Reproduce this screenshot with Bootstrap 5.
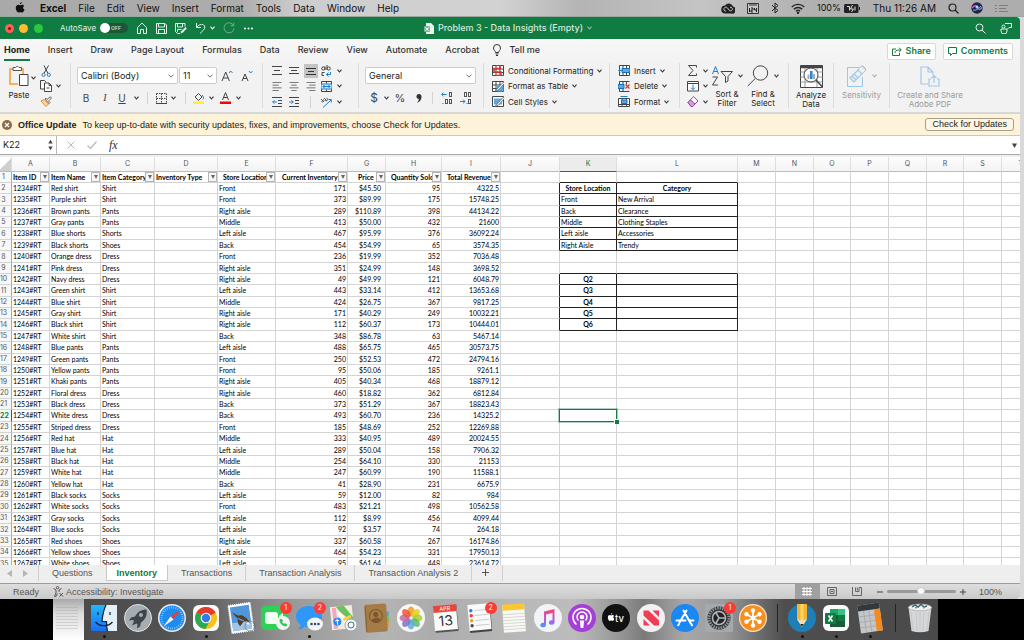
<!DOCTYPE html>
<html lang="en">
<head>
<meta charset="utf-8">
<meta name="viewport" content="width=device-width, initial-scale=1">
<title>Problem 3 - Data Insights (Empty)</title>
<link href="https://cdn.jsdelivr.net/npm/bootstrap@5.3.0/dist/css/bootstrap.min.css" rel="stylesheet">
<style>
:root{--xl:#107c41;--line:#d4d4d4}
body{font-family:Inter,"Liberation Sans",sans-serif;font-size:8px;line-height:10px;color:#222;background:#d9d9d9;height:100vh;overflow:hidden}
button,select,input{font:inherit;color:inherit}
button{background:none;border:0;padding:0}
a{color:inherit;text-decoration:none}
svg{display:block;flex:none}
.chev{width:5px;height:4px;fill:none;stroke:#333;stroke-width:1.1}
/* system menu */
.menubar{height:17px;font-size:10px;line-height:16px;color:#111;background:linear-gradient(90deg,#a9a9a9 0,#adadad 240px,#cdcdcd 300px,#d2d2d2 500px,#b4b4b4 580px,#c4c4c4 700px,#b0b0b0 820px,#adadad 100%);border-bottom:1px solid #9aa79f}
.menus{gap:12px;margin-left:15px}
.tray{gap:12px;padding-right:16px}
.tray .batt{gap:3px;font-size:9px}
/* window */
.win{margin-right:4px;background:#f3f3f3}
.titlebar{height:22px;background:var(--xl);color:#e6f2ea;border-radius:0 4px 0 0;display:grid;grid-template-columns:1fr auto 1fr;align-items:center}
.lamp{width:9px;height:9px;border-radius:50%;display:flex;align-items:center;justify-content:center}
.lamp i{width:3px;height:3px;border-radius:50%;background:#7a0f0b}
.switch{width:28px;height:10px;border-radius:5px;background:#1d5636;color:#cfe0d6;font-size:5px;line-height:10px;font-weight:600;padding-left:11px;position:relative;text-align:left}
.switch::before{content:"";position:absolute;left:0;top:0;width:10px;height:10px;border-radius:50%;background:#fff}
.doc{font-size:9px;font-weight:500;color:#d5eadd;padding-right:4px}
.tabs{height:24px;font-size:9px;font-weight:500;color:#333;background:linear-gradient(#f7f7f7,#f3f3f3)}
.tabs nav{gap:18px;padding-left:4px}
.tabs nav a{line-height:12px;padding:5px 0 3px;border-bottom:2px solid transparent}
.tabs nav a.active{font-weight:700;border-color:var(--xl);color:#222}
.sharebtn{height:17px;background:#fff;border:1px solid #d8d8d8;border-radius:2px;color:var(--xl);font-weight:600;padding:0 4px}
.ribbon{height:50px;background:#f2f2f2;border-bottom:1px solid #d8d8d8}
.grp{height:45px;border-right:1px solid #dcdcdc;flex:none}
.grp.end{border:0}
.r3{display:grid;grid-template-rows:15px 16px 15px;align-items:center}
.vsep{width:1px;height:12px;background:#d4d4d4}
.form-select.pick{height:17px;min-height:0;font-size:9px;line-height:15px;padding:0 14px 0 3px;border:1px solid #ccc;border-radius:2px;background-size:6px;background-position:right 3px center;background-color:#fff;color:#222}
.slot{display:flex;align-items:center;justify-content:center;flex:none}
.w7{width:7px}.w14{width:14px}.w18{width:18px}.w20{width:20px}
.lbl{line-height:9px;text-align:center;color:#222;margin-top:2px}
.dim{color:#9a9a9a}
.bigic{height:26px;gap:5px}
.fmt{font-size:10px;color:#444}
.align{grid-template-columns:17px 17px 17px 14px 12px;justify-items:center}
.on{background:#c3c3c3;width:14px;height:14px}
/* update bar */
.update{height:23px;background:#fdf3da;border-top:1px solid #d8d5cc;border-bottom:1px solid #cfc8b0;font-family:"Liberation Sans",Arial,sans-serif;font-size:9px;color:#222}
.update .chk{height:13px;border:1px solid #a89f88;border-radius:3px;padding:0 6px;line-height:11px;font-size:9px;background:#fdf6e4}
/* formula bar */
.formula{height:19px;background:#fff;border-bottom:1px solid #a8a8a8}
.namebox{width:48px;border:0;background:#fff;padding:0 3px;font-size:9px;outline:0}
.fx{font:italic 12px/14px "Liberation Serif",serif;color:#333}
.entry{border:0;outline:0;background:#fff;min-width:0}
/* sheet */
.sheet{background:#fff;border-top:2px solid #efefef;min-height:0;overflow:hidden;font-family:Lato,"Liberation Sans",sans-serif;font-size:7px;color:#000}
.sheet table{table-layout:fixed;width:100%;border-collapse:separate;border-spacing:0}
.sheet td,.sheet th{padding:0 1px;border-right:1px solid var(--line);border-bottom:1px solid var(--line);white-space:nowrap;overflow:hidden;line-height:10px;height:11px;font-weight:400}
.sheet tbody tr:nth-child(8n+3) td,.sheet tbody tr:nth-child(8n+6) td,.sheet tbody tr:nth-child(8n+8) td{height:12px;line-height:11px}
.sheet thead th{height:15px;line-height:14px;text-align:center;color:#555;background:linear-gradient(#fdfdfd,#f3f3f3);border-right-color:#dedede;border-bottom-color:#bcbcbc;font-family:Inter,sans-serif}
.sheet thead th.sel{background:#ececec;color:var(--xl);border-bottom-color:var(--xl)}
.sheet thead th.corner{background:linear-gradient(135deg,transparent 50%,#cfcfcf 50%)}
.sheet tbody th{padding:0 4px 0 0;text-align:center;color:#555;background:#f8f8f8;border-right-color:#a9a9a9;font-family:Inter,sans-serif}
.sheet tbody th.sel{color:var(--xl);font-weight:700;border-right-color:var(--xl)}
.sheet td.hd{font-weight:700}
.hdin{display:flex;align-items:center;height:10px}
.hdin span{flex:1;overflow:hidden}
.fbtn{width:9px;height:10px;border:1px solid #b5b5b5;background:#f7f7f7;display:flex;align-items:center;justify-content:center;flex:none;margin-right:-1px}
.fbtn::after{content:"";border:2px solid transparent;border-top:4px solid #666;border-bottom:0}
.sheet td.num{text-align:right}
.sheet td.cash{text-align:right;padding-right:4px}
.sheet td.blkR{border-right-color:#222}
.sheet td.blkB{border-bottom-color:#222}
.sheet td.cur{position:relative;overflow:visible}
.cur::before{content:"";position:absolute;inset:-1px;border:1px solid var(--xl);box-shadow:0 0 0 1px #107c4155}
.cur::after{content:"";position:absolute;right:-3px;bottom:-3px;width:4px;height:4px;background:var(--xl);border:solid #fff;border-width:1px 0 0 1px;box-sizing:content-box}
/* sheet tabs, status */
.stabs,.status{font-family:"Liberation Sans",Arial,sans-serif;font-size:9px}
.stabs{height:18px;background:#eee;color:#555}
.stabs a{padding:0 13px;line-height:17px;height:16px;border-right:1px solid #d0d0d0}
.stabs a.active{background:#fff;color:var(--xl);font-weight:700;padding:0 10px;border:1px solid #c8c8c8;border-top:0}
.status{height:16px;background:linear-gradient(#dedede,#c9c9c9);border-top:1px solid #9c9c9c;color:#555;border-radius:0 0 4px 0}
.vbtn{width:25px;height:15px}
.vbtn.act{background:#a0a0a0}
.zoomer{appearance:none;width:69px;height:8px;background:transparent}
.zoomer::-webkit-slider-runnable-track{height:3px;border-radius:2px;background:#999}
.zoomer::-webkit-slider-thumb{appearance:none;width:8px;height:8px;margin-top:-3px;border-radius:50%;background:#fafafa;border:1px solid #ccc}
/* dock */
.dockrow{height:41px;background:#000}
.paper{width:31px;background:repeating-linear-gradient(#0000 0 2px,#8884 2px 3px) 3px 6px/22px 24px no-repeat,linear-gradient(#a8a8a8,#dcdcdc 35%,#fff)}
.dock{width:854px;background:linear-gradient(90deg,#4b4b4b 0,#525252 80px,#666 130px,#999 210px,#b4b4b4 300px,#acacac 350px,#b9b9b9 440px,#bcbcbc 490px,#929292 540px,#7a7a7a 560px,#a8a8a8 600px,#9a9a9a 640px,#4e4e4e 700px,#4a4a4a 100%);padding:5px 0 0 6px}
.apps{width:677px}
.app{width:28px;height:36px;position:relative;display:block}
.app svg{width:28px;height:28px;overflow:visible}
.app.run::after{content:"";position:absolute;left:13px;bottom:2px;width:3px;height:3px;border-radius:50%;background:#111}
.bub{position:absolute;right:-3px;top:-2px;width:12px;height:12px;border-radius:50%;background:#fb3b36;color:#fff;font-size:7px;line-height:12px;text-align:center}
.dsep{width:1px;height:28px;background:#222}
</style>
</head>
<body class="d-flex flex-column">

<svg width="0" height="0" class="position-absolute" aria-hidden="true">
  <symbol id="c" viewBox="0 0 5 4"><path d="M.5 .7 2.5 3 4.5 .7"/></symbol>
  <symbol id="apple" viewBox="0 0 14 17"><path d="M9.6 0c.1 1.500-1.300 3-2.700 3C6.700 1.600 8.200.1 9.600 0zM12.700 5.600c-1.900 1.200-1.600 4.200.7 5.200-.6 1.800-2 4.200-3.400 4.200-1 0-1.300-.6-2.600-.6s-1.700.6-2.600.6C3.200 15 .8 11.200 1 8.300c.1-2.800 2-4.300 3.700-4.300 1.100 0 2 .7 2.700.7s1.800-.8 3.200-.7c.8 0 1.700.5 2.100 1.600z"/></symbol>
</svg>

<header class="menubar d-flex align-items-center flex-shrink-0">
  <svg width="10" height="12" viewBox="0 0 14 17" style="margin-left:15px" fill="#111"><use href="#apple"/></svg>
  <nav class="menus d-flex"><a href="#"><b>Excel</b></a><a href="#">File</a><a href="#">Edit</a><a href="#">View</a><a href="#">Insert</a><a href="#">Format</a><a href="#">Tools</a><a href="#">Data</a><a href="#">Window</a><a href="#">Help</a></nav>
  <div class="tray d-flex align-items-center ms-auto">
    <svg width="14" height="11" viewBox="0 0 14 11"><path d="M4.500 10.500a4 4 0 0 1-.5-8A4.500 4.500 0 0 1 12 3.500a3.600 3.600 0 0 1-2 7z" fill="#222"/><path d="M5 8.200a2 2 0 1 1 1.500-3.200L8.500 7.500A1.800 1.800 0 1 0 9 4.400" fill="none" stroke="#ccc"/></svg>
    <svg width="12" height="11" viewBox="0 0 12 11"><path d="M.5.500h11v10H.5z" fill="#c8c8c8" stroke="#333"/><path d="M2 2h8" stroke="#333"/><path d="M2.500 5v4M4 5h2v2H4v2h2M7.500 5v2h2M9.500 5v4" fill="none" stroke="#222"/></svg>
    <svg width="8" height="12" viewBox="0 0 8 12"><path d="M1 3.200 7 8.500 4 11V1l3 2.500L1 9" fill="none" stroke="#222"/></svg>
    <svg width="14" height="11" viewBox="0 0 14 11" fill="none" stroke="#222" stroke-width="1.300"><path d="M.7 4a9 9 0 0 1 12.600 0M2.800 6.200a6 6 0 0 1 8.400 0M4.900 8.200a3 3 0 0 1 4.200 0"/><circle cx="7" cy="9.800" r=".6"/></svg>
    <span class="batt d-flex align-items-center">100%<svg width="17" height="9" viewBox="0 0 17 9"><rect width="14.500" height="9" rx="1.500" fill="#222"/><path d="M15.500 3v3" stroke="#222"/><path d="M3 2.500h2.500v4M8.500 1 6.500 5h3L7.500 8M11 2.500v4" stroke="#ddd" fill="none"/></svg></span>
    <span>Thu 11:26 AM</span>
    <svg width="11" height="11" viewBox="0 0 11 11" fill="none" stroke="#222" stroke-width="1.200"><circle cx="4.500" cy="4.500" r="3.500"/><path d="m7 7 3.500 3.500"/></svg>
    <svg width="12" height="12" viewBox="0 0 12 12"><circle cx="6" cy="6" r="5.700" fill="#222547"/><path d="M1 6c3-4 5-2 6 0s3 2 4-1" stroke="#d25bc0" fill="none" stroke-width="1.500"/><path d="M2 8c3 1 5-1 8-4" stroke="#4bd3e8" fill="none"/><circle cx="6" cy="5" r="1.500" fill="#b9c8ff"/></svg>
    <svg width="13" height="9" viewBox="0 0 13 9"><path d="M4 1.500h9M4 4.500h7M4 7.500h9M0 1.500h2M0 4.500h2M0 7.500h2" stroke="#7d7d7d"/></svg>
  </div>
</header>

<main class="win d-flex flex-column flex-grow-1" style="min-height:0">
  <div class="titlebar flex-shrink-0">
    <div class="d-flex align-items-center">
      <span class="lamp" style="background:#fe5f57;margin-left:5px"><i></i></span><span class="lamp" style="background:#febc2e;margin-left:5px"></span><span class="lamp" style="background:#28c840;margin-left:6px"></span>
      <label for="asv" style="margin-left:17px">AutoSave</label>
      <button id="asv" class="switch ms-1">OFF</button>
      <button class="ms-2" aria-label="Home"><svg width="12" height="12" viewBox="0 0 12 12" fill="none" stroke="#e6f2ea"><path d="M1.500 5.500 6 1l4.500 4.500v6h-3v-4h-3v4h-3z"/></svg></button>
      <button class="ms-2" aria-label="Save"><svg width="11" height="11" viewBox="0 0 11 11" fill="none" stroke="#e6f2ea"><path d="M.5.500h8.500l1.500 1.500v8.500H.5zM2.500.5v3.500h6V.5M2.500 10.500V6.500h6v4"/></svg></button>
      <button class="ms-2" aria-label="Save as"><svg width="12" height="11" viewBox="0 0 12 11" fill="none" stroke="#e6f2ea"><path d="M5 10.500H2.500L.5 8.500V.5h9.500v3M2.500.5v3.500h5V.5M2.500 9V6.500h4"/><path d="m5.500 10.500.7-2.300 4.300-4.200 1.300 1.500L7.700 9.800z" fill="#e6f2ea" stroke="none"/></svg></button>
      <button class="ms-2" aria-label="Undo"><svg width="11" height="12" viewBox="0 0 11 12" fill="none" stroke="#e6f2ea"><path d="M1.500 1v4.500H6M1.700 5.300C4 1.500 9.500 1.500 9.800 5c.2 2.500-2.500 4-4.800 6.500"/></svg></button>
      <svg class="chev ms-1" style="stroke:#fff"><use href="#c"/></svg>
      <button class="ms-2" aria-label="Redo"><svg width="12" height="12" viewBox="0 0 12 12" fill="none" stroke="#6fae8c"><path d="M10.500 3.500A5 5 0 1 0 11 6.500M10.800.8v3H7.500"/></svg></button>
      <svg class="ms-2" width="11" height="3" viewBox="0 0 11 3" fill="#fff"><circle cx="2" cy="1.500" r="1"/><circle cx="5.500" cy="1.500" r="1"/><circle cx="9" cy="1.500" r="1"/></svg>
    </div>
    <div class="d-flex align-items-center doc gap-1">
      <svg width="10" height="11" viewBox="0 0 10 11"><path d="M2 0h5l3 3v8H2z" fill="#e9f3ec"/><rect y="3" width="6" height="6" rx="1" fill="#7bb696"/><path d="m1.500 4.500 3 3m0-3-3 3" stroke="#fff"/></svg>
      <span>Problem 3 - Data Insights (Empty)</span><svg class="chev" style="stroke:#8fc3a6"><use href="#c"/></svg>
    </div>
    <div class="d-flex align-items-center justify-content-end" style="padding-right:8px;gap:14px">
      <svg width="11" height="11" viewBox="0 0 11 11" fill="none" stroke="#e6f2ea"><circle cx="4.500" cy="4.500" r="3.500"/><path d="m7 7 3.500 3.500"/></svg>
      <svg width="12" height="12" viewBox="0 0 12 12" fill="none" stroke="#e6f2ea"><path d="M5 1.500h6.500v4H9L7.500 7M1 7h6v2a3 3 0 0 1-6 0z"/><circle cx="3.500" cy="4.500" r="1.500"/></svg>
    </div>
  </div>

  <div class="tabs d-flex flex-shrink-0">
    <nav class="d-flex align-items-start"><a href="#" class="active">Home</a><a href="#">Insert</a><a href="#">Draw</a><a href="#">Page Layout</a><a href="#">Formulas</a><a href="#">Data</a><a href="#">Review</a><a href="#">View</a><a href="#">Automate</a><a href="#">Acrobat</a></nav>
    <button class="d-flex align-items-center gap-2 h-100" style="margin-left:14px;padding-bottom:3px"><svg width="8" height="12" viewBox="0 0 8 12" fill="none" stroke="#333"><path d="M2.500 8.500C2.500 7 .5 6.300.5 4a3.500 3.500 0 0 1 7 0c0 2.300-2 3-2 4.500zM2.500 10h3M3 11.500h2"/></svg>Tell me</button>
    <div class="ms-auto d-flex align-items-center" style="padding-right:7px;gap:7px">
      <button class="sharebtn d-flex align-items-center gap-1"><svg width="10" height="9" viewBox="0 0 10 9" fill="none" stroke="#107c41"><path d="M4 2H.5v6.500h7V6M3 6c0-2 1.500-3 3.500-3H9M7 .7 9.300 3 7 5.200"/></svg>Share</button>
      <button class="sharebtn d-flex align-items-center gap-1"><svg width="9" height="9" viewBox="0 0 9 9" fill="none" stroke="#107c41"><path d="M.5.500h8v6H4.500L2.500 8.500v-2h-2z"/></svg>Comments</button>
    </div>
  </div>

  <div class="ribbon d-flex flex-shrink-0">
    <div class="grp d-flex" style="width:71px">
      <button class="d-flex flex-column align-items-center" style="width:24px;margin-left:7px"><svg width="20" height="24" viewBox="0 0 20 24" fill="none"><path d="M5 6H1v15h8M14 11V6h-4" stroke="#f0a23b" stroke-width="1.600"/><path d="M4 4.500h2.500a2 2 0 0 1 3.500 0h2.500v3H4z" stroke="#555" fill="#fff"/><path d="M10.500 11.500h8.500v11h-8.500z" stroke="#444" fill="#fff"/></svg><span class="lbl mt-1">Paste</span></button>
      <svg class="chev" style="margin-top:13px"><use href="#c"/></svg>
      <div class="r3" style="margin-left:4px">
        <svg width="12" height="12" viewBox="0 0 12 12" fill="none"><path d="m4 .5 4 8M8.500.500l-4.500 8" stroke="#444"/><circle cx="3.500" cy="9.800" r="1.600" stroke="#1b7fd0"/><circle cx="8.800" cy="9.800" r="1.600" stroke="#1b7fd0"/></svg>
        <div class="d-flex align-items-center gap-1"><svg width="12" height="12" viewBox="0 0 12 12" fill="#fff" stroke="#444"><path d="M.5.500h4l1.500 1.500M.5.500v8.500h4"/><path d="M4.500 3h4.500l2.500 2.500v6h-7zM9 3v2.500h2.500M6.500 8h3"/></svg><svg class="chev"><use href="#c"/></svg></div>
        <svg width="12" height="12" viewBox="0 0 12 12"><path d="m1 5 5 5.500L8.500 8 4 3.500z" fill="#fbd9a8" stroke="#e28a2b"/><path d="m5 3 4 4.500 1-1-1.500-1.500L11.500 2 10.300.8 7 3.500 6 2.200z" fill="#fff" stroke="#555" stroke-width=".9"/></svg>
      </div>
    </div>

    <div class="grp d-flex flex-column" style="width:192px;padding:4px 0 0 6px">
      <div class="d-flex align-items-center"><select class="form-select pick" aria-label="Font" style="width:101px"><option>Calibri (Body)</option></select><select class="form-select pick" aria-label="Size" style="width:38px;margin-left:1px"><option>11</option></select>
        <svg class="ms-1" width="12" height="12" viewBox="0 0 12 12" fill="none" stroke="#444"><path d="m1 11 3.700-9 3.700 9M2.300 8h4.800"/><path d="m8 3 1.700-2L11.500 3" stroke="#1b7fd0"/></svg><svg style="margin-left:8px" width="12" height="12" viewBox="0 0 12 12" fill="none" stroke="#444"><path d="m1 11 3-7 3 7M2 8.500h4"/><path d="m8 1 1.700 2L11.500 1" stroke="#1b7fd0"/></svg></div>
      <div class="d-flex align-items-center fmt" style="height:24px;padding-top:4px">
        <button class="slot w18">B</button><button class="slot w20" style="font-family:'Liberation Serif',serif"><i>I</i></button><button class="slot w14"><u>U</u></button><span class="slot w14"><svg class="chev"><use href="#c"/></svg></span><span class="vsep ms-1"></span>
        <span class="slot w18 ms-1"><svg width="11" height="11" viewBox="0 0 11 11" fill="none" stroke="#444"><path d="M.5.500h10M.5.500v10M10.500.5v10M5.500.5v10M.5 5.500h10" stroke-dasharray="1.500 1"/><path d="M0 10.500h11"/></svg></span><span class="slot w7 me-1"><svg class="chev"><use href="#c"/></svg></span><span class="vsep ms-1"></span>
        <span class="slot w18 ms-1"><svg width="12" height="12" viewBox="0 0 12 12" fill="none"><path d="m2 5 3.500-3.500L9 5 5.500 8.500z" stroke="#444"/><path d="M9 3c1.500 1.500 2 2.800 1 4.300" stroke="#1b7fd0"/><path d="M0 9.500h11V12H0z" fill="#fff02a"/></svg></span><span class="slot w7"><svg class="chev"><use href="#c"/></svg></span>
        <span class="slot w20"><svg width="11" height="12" viewBox="0 0 11 12"><path d="M2.500 8 5.500.5l3 7.500M3.500 5.500h4" fill="none" stroke="#444"/><path d="M0 9.500h11V12H0z" fill="#f00"/></svg></span><span class="slot w7"><svg class="chev"><use href="#c"/></svg></span>
      </div>
    </div>

    <div class="grp" style="width:96px;padding-left:5px">
      <div class="r3 align">
        <svg width="10" height="9" viewBox="0 0 10 9" stroke="#444"><path d="M0 .5h10M2 4.500h6M0 8.500h10"/></svg>
        <svg width="10" height="9" viewBox="0 0 10 9" stroke="#444"><path d="M0 1.500h10M2 4.500h6M0 7.500h10"/></svg>
        <span class="on slot"><svg width="10" height="9" viewBox="0 0 10 9" stroke="#333"><path d="M0 2.500h10M2 5.500h6M0 8.500h10"/></svg></span>
        <svg width="11" height="12" viewBox="0 0 11 12" fill="none" stroke="#444"><circle cx="2.300" cy="3.500" r="1.600"/><path d="M4 1.500V5M6 0v5"/><circle cx="7.700" cy="3.500" r="1.600"/><path d="M3.500 7.500H1v3h2" /><path d="M9.500 7v2.500h-4M7.500 7.500l-2 2 2 2" stroke="#1b7fd0"/></svg><svg class="chev"><use href="#c"/></svg>
        <svg width="10" height="9" viewBox="0 0 10 10" stroke="#666"><path d="M0 .5h10M0 3.500h7M0 6.500h10M0 9.500h7"/></svg>
        <svg width="10" height="9" viewBox="0 0 10 10" stroke="#666"><path d="M0 .5h10M2 3.500h6M0 6.500h10M2 9.500h6"/></svg>
        <svg width="10" height="9" viewBox="0 0 10 10" stroke="#666"><path d="M0 .5h10M3 3.500h7M0 6.500h10M3 9.500h7"/></svg>
        <svg width="11" height="11" viewBox="0 0 11 11" fill="none" stroke="#444"><path d="M.5.500h10v10H.5zM5.500.5v2M5.500 8.500v2"/><path d="M0 3h11v5H0z" fill="#cfe6f8" stroke="#1b7fd0"/><path d="M2 5.500h7M3.500 4 2 5.500 3.500 7M7.500 4 9 5.500 7.500 7" stroke="#1b7fd0"/></svg><svg class="chev"><use href="#c"/></svg>
        <svg width="10" height="10" viewBox="0 0 10 10" fill="none" stroke="#444"><path d="M0 .5h10M6 3.500h4M6 6.500h4M0 9.500h10"/><path d="M5 5H.7M2.500 3.200.7 5l1.800 1.800" stroke="#1b7fd0"/></svg>
        <svg width="10" height="10" viewBox="0 0 10 10" fill="none" stroke="#444"><path d="M0 .5h10M6 3.500h4M6 6.500h4M0 9.500h10"/><path d="M0 5h4.300M2.500 3.200 4.300 5 2.500 6.800" stroke="#1b7fd0"/></svg>
        <span class="vsep"></span>
        <svg width="12" height="12" viewBox="0 0 12 12" fill="none"><path d="m1 3 3 3M4 2l3 3M1.500 5.500a1.400 1.400 0 1 0 2-2M5 4a1.400 1.400 0 1 0 1.500-2" stroke="#555"/><path d="M3 11.500 11 4M8.500 3.500H11.300V6.500" stroke="#1b7fd0"/></svg><svg class="chev"><use href="#c"/></svg>
      </div>
    </div>

    <div class="grp d-flex flex-column" style="width:125px;padding:4px 0 0 6px">
      <select class="form-select pick" aria-label="Number format" style="width:111px"><option>General</option></select>
      <div class="d-flex align-items-center" style="height:24px;padding-top:4px;font-size:12px;color:#444">
        <button class="slot w18">$</button><span class="slot w7"><svg class="chev"><use href="#c"/></svg></span><button class="slot w20" style="font-size:11px">%</button><button class="slot w18"><svg width="6" height="9" viewBox="0 0 6 9"><path d="M3 0a2.500 2.500 0 0 1 2.500 3C5.500 6 3.500 8 1 9c1-1.500 1.800-2.500 1.800-4A2.500 2.500 0 1 1 3 0z" fill="#333"/></svg></button><span class="vsep ms-1"></span>
        <svg class="ms-2" width="12" height="12" viewBox="0 0 12 12" fill="none" stroke="#555"><path d="M5.500 2.500H.7M2.500.7.700 2.500l1.800 1.800" stroke="#1b7fd0"/><rect x="8.500" y=".5" width="2" height="4"/><rect x="4.500" y="7.500" width="2" height="4"/><rect x="8.500" y="7.500" width="2" height="4"/><path d="M2 11v1"/></svg>
        <svg style="margin-left:7px" width="12" height="12" viewBox="0 0 12 12" fill="none" stroke="#555"><path d="M0 9.500h5M3.200 7.700 5 9.500l-1.800 1.800" stroke="#1b7fd0"/><rect x="4.500" y=".5" width="2" height="4"/><rect x="8.500" y=".5" width="2" height="4"/><rect x="8.500" y="7.500" width="2" height="4"/><path d="M7 11v1"/></svg>
      </div>
    </div>

    <div class="grp r3 ps-2" style="width:126px">
      <button class="d-flex align-items-center gap-1"><svg width="12" height="11" viewBox="0 0 12 11"><path d="M.5.500h11v10H.5zM.5 4h11M.5 7.500h11M4 .5v10M8 .5v10" fill="#fff" stroke="#444"/><path d="M4 0h4v3.500H2V7h7v3.500H4" fill="none" stroke="#e0312c" stroke-width="1.500"/></svg>Conditional Formatting<svg class="chev"><use href="#c"/></svg></button>
      <button class="d-flex align-items-center gap-1"><svg width="12" height="11" viewBox="0 0 12 11"><path d="M.5.500h11v10H.5zM.5 4h11M.5 7.500h11M4 .5v10M8 .5v10" fill="#fff" stroke="#444"/><path d="M4.500 4h7v6.500h-7z" fill="#5aa9e6"/><path d="M11.500 1 6 7 3 10.500l3.500-1.500L12 3" fill="#fff" stroke="#555" stroke-width=".7"/></svg>Format as Table<svg class="chev"><use href="#c"/></svg></button>
      <button class="d-flex align-items-center gap-1"><svg width="12" height="11" viewBox="0 0 12 11"><path d="M.5.500h11v10H.5z" fill="#fff" stroke="#444"/><path d="M2 2.500h8v6H2z" fill="#5aa9e6"/><path d="M11.500 1 6 7 3 10.500l3.500-1.500L12 3" fill="#fff" stroke="#555" stroke-width=".7"/></svg>Cell Styles<svg class="chev"><use href="#c"/></svg></button>
    </div>

    <div class="grp r3 ps-2" style="width:70px">
      <button class="d-flex align-items-center gap-1"><svg width="12" height="11" viewBox="0 0 12 11"><path d="M1.500.5h10v10h-10zM5 .5v10M8.500.5v10" fill="#fff" stroke="#444"/><path d="M4 3.500h8v4H4z" fill="#5aa9e6" stroke="#1b6fb8"/><path d="M5 5.500H.7M2.500 3.700.7 5.500l1.800 1.800" fill="none" stroke="#1b7fd0"/></svg>Insert<svg class="chev"><use href="#c"/></svg></button>
      <button class="d-flex align-items-center gap-1"><svg width="12" height="11" viewBox="0 0 12 11"><path d="M1.500.5h10M1.500 10.500h10M1.500.5v3M5 .5v3M8.500.5v3M1.500 7.500v3M5 7.500v3" fill="none" stroke="#444"/><path d="M0 3.500h6v4H0z" fill="#5aa9e6" stroke="#1b6fb8"/><path d="m7.500 3.500 4 4m0-4-4 4" stroke="#e0312c" stroke-width="1.200"/></svg>Delete<svg class="chev"><use href="#c"/></svg></button>
      <button class="d-flex align-items-center gap-1"><svg width="12" height="11" viewBox="0 0 12 11"><path d="M.5 2.500h11v8H.5zM4 2.500v8M8.500 2.500v8M.5 8.500h11" fill="#fff" stroke="#444"/><path d="M3.500 4h5.500v3.500H3.500z" fill="#5aa9e6" stroke="#1b6fb8"/><path d="M2.500.5h7" stroke="#1b7fd0"/></svg>Format<svg class="chev"><use href="#c"/></svg></button>
    </div>

    <div class="grp d-flex" style="width:109px;padding-left:7px">
      <div class="r3">
        <span class="d-flex align-items-center gap-1"><svg width="12" height="11" viewBox="0 0 12 11" fill="none" stroke="#444"><path d="M9.500 2.500V.5H1.500L6 5.500 1.500 10.500h8v-2"/></svg><svg class="chev"><use href="#c"/></svg></span>
        <span class="d-flex align-items-center gap-1"><svg width="12" height="11" viewBox="0 0 12 11" fill="#fff" stroke="#444"><path d="M.5.500h11v9.500H.5zM.5 2.500h11"/><path d="M6 3.500v5M4 6.700l2 2 2-2" fill="none" stroke="#1b7fd0"/></svg><svg class="chev"><use href="#c"/></svg></span>
        <span class="d-flex align-items-center gap-1"><svg width="12" height="11" viewBox="0 0 12 11"><path d="m1 6.500 5.500-6L11 5l-5.500 5.500H4z" fill="#fff" stroke="#a13fb0"/><path d="m1 6.500 2.500-2.700L8 8l-2.500 2.500H4z" fill="#d79be0" stroke="#a13fb0"/></svg><svg class="chev"><use href="#c"/></svg></span>
      </div>
      <button class="d-flex flex-column align-items-center" style="width:36px;margin-left:1px"><span class="d-flex align-items-center bigic"><svg width="22" height="20" viewBox="0 0 22 20" fill="none"><path d="m1.500 8 3-7.500 3 7.500M2.500 5.500h4" stroke="#1b7fd0"/><path d="M1.500 11h5l-5 8h5.500" stroke="#444"/><path d="M10 5.500h11.500l-4.500 5v4.500l-2.500 1.500v-6z" stroke="#444"/></svg><svg class="chev"><use href="#c"/></svg></span><span class="lbl">Sort &amp;<br>Filter</span></button>
      <button class="d-flex flex-column align-items-center" style="width:36px"><span class="d-flex align-items-center bigic"><svg width="22" height="22" viewBox="0 0 22 22" fill="none" stroke="#444"><circle cx="13.500" cy="8" r="7.200"/><path d="M8.300 13.500.7 21"/></svg><svg class="chev"><use href="#c"/></svg></span><span class="lbl">Find &amp;<br>Select</span></button>
    </div>

    <div class="grp" style="width:45px"><button class="d-flex flex-column align-items-center w-100"><span class="bigic d-flex align-items-center"><svg width="23" height="23" viewBox="0 0 23 23"><path d="M.5.500h22v22H.5z" fill="#fff" stroke="#444"/><path d="M.5 2h22" stroke="#444" stroke-width="2.500"/><path d="M.5 7h22M.5 12h22M.5 17h22M5 3v19M17 3v19" stroke="#999"/><circle cx="11" cy="10" r="7" fill="#fff" stroke="#444"/><path d="M7.500 9.500h2V14h-2zM13 9h2v5h-2z" fill="#aaa"/><path d="M10 6h2.600v8H10z" fill="#2b88d8"/><path d="m16 15 6.500 7" stroke="#444" stroke-width="1.500"/></svg></span><span class="lbl">Analyze<br>Data</span></button></div>
    <div class="grp" style="width:56px"><button class="d-flex flex-column align-items-center w-100"><span class="bigic d-flex align-items-center"><svg width="20" height="22" viewBox="0 0 20 22" fill="none" stroke="#9cc7e6"><path d="M12 2.500H.5v19h15V12"/><path d="m3 13 8-8 4 4-8 8zM5 11l4 4M7 9l4 4" stroke-width="1.200"/><path d="m11 5 3-4 5 4-4 4M15 0l4 4"/></svg><svg class="chev" style="stroke:#aaa"><use href="#c"/></svg></span><span class="lbl dim">Sensitivity</span></button></div>
    <div class="grp end" style="width:80px"><button class="d-flex flex-column align-items-center w-100"><span class="bigic d-flex align-items-center"><svg width="20" height="21" viewBox="0 0 20 21" fill="none" stroke="#a3c6ea" stroke-width="1.200"><path d="M8 18H1V1h7l5 5v3M8 1v5h5M11 13H9v7h10v-7h-2M14 17V10M11.500 12 14 9.500 16.500 12"/></svg></span><span class="lbl dim text-nowrap">Create and Share<br>Adobe PDF</span></button></div>
  </div>

  <div class="update d-flex align-items-center flex-shrink-0" role="status">
    <svg width="10" height="10" viewBox="0 0 10 10" style="margin-left:2px"><circle cx="5" cy="5" r="5" fill="#8b6a48"/><path d="m3 3 4 4m0-4-4 4" stroke="#fff" stroke-width="1.300"/></svg>
    <b style="margin-left:6px">Office Update</b><span style="margin-left:6px">To keep up-to-date with security updates, fixes, and improvements, choose Check for Updates.</span>
    <button class="chk ms-auto" style="margin-right:6px">Check for Updates</button>
  </div>

  <div class="formula d-flex align-items-center flex-shrink-0">
    <input class="namebox" value="K22" aria-label="Name box">
    <svg width="5" height="12" viewBox="0 0 5 12" fill="#444" style="margin-right:3px"><path d="M.3 4.500 2.500.8l2.200 3.700zM.3 7.500l2.200 3.700 2.200-3.700z"/></svg>
    <span style="width:1px;background:#bbb" class="h-100"></span>
    <svg width="8" height="8" viewBox="0 0 8 8" stroke="#bbb" style="margin-left:10px"><path d="m.5.500 7 7m0-7-7 7"/></svg>
    <svg width="10" height="8" viewBox="0 0 10 8" stroke="#bbb" fill="none" style="margin-left:12px" stroke-width="1.300"><path d="m.5 4.500 3 3 6-7"/></svg>
    <span class="fx" style="margin-left:12px">fx</span>
    <input class="entry flex-grow-1 ms-2" aria-label="Formula">
    <svg width="5" height="5" viewBox="0 0 5 5" fill="#444" style="margin-right:3px"><path d="M0 .5h5L2.500 5z"/></svg>
  </div>

  <div class="sheet flex-grow-1">
    <table><colgroup id="cols"></colgroup><thead><tr id="letters"></tr></thead><tbody id="rows"></tbody></table>
  </div>

  <nav class="stabs d-flex flex-shrink-0">
    <span class="d-flex align-items-center" style="width:39px;border-right:1px solid #d0d0d0;height:16px;padding-left:7px;gap:11px"><svg width="5" height="7" viewBox="0 0 5 7" fill="#b5b5b5"><path d="M5 0v7L0 3.500z"/></svg><svg width="5" height="7" viewBox="0 0 5 7" fill="#b5b5b5"><path d="M0 0v7l5-3.500z"/></svg></span>
    <a href="#" class="border-0">Questions</a><a href="#" class="active">Inventory</a><a href="#">Transactions</a><a href="#">Transaction Analysis</a><a href="#">Transaction Analysis 2</a><a href="#" aria-label="New sheet" style="padding-top:4px;padding-left:10px"><svg width="7" height="7" viewBox="0 0 7 7" stroke="#555"><path d="M0 3.500h7M3.500 0v7"/></svg></a>
  </nav>

  <footer class="status d-flex align-items-center flex-shrink-0">
    <span style="margin-left:13px">Ready</span>
    <svg style="margin-left:14px" width="11" height="11" viewBox="0 0 11 11" fill="none" stroke="#555"><circle cx="4.500" cy="1.700" r="1.200"/><path d="m.5 2.500 2.500 1.500v3l-1.500 3.500 1 .3 2-3.300M8.500 2.500 6 4v2"/><path d="m6.500 7 3.500 3.500m0-3.500-3.500 3.500"/></svg>
    <span style="margin-left:2px">Accessibility: Investigate</span>
    <div class="d-flex align-items-center ms-auto">
      <button class="vbtn act slot" aria-label="Normal"><svg width="10" height="9" viewBox="0 0 10 9" stroke="#fff"><path d="M0 1.500h10M0 4.500h10M0 7.500h10M2 0v9M5 0v9M8 0v9"/></svg></button>
      <button class="vbtn slot" aria-label="Page layout"><svg width="10" height="9" viewBox="0 0 10 9" fill="none" stroke="#666"><path d="M.5.500h9v8h-9zM3 2.500h4v4H3zM4 4.500h2"/></svg></button>
      <button class="vbtn slot" aria-label="Page break"><svg width="10" height="9" viewBox="0 0 10 9" fill="none" stroke="#666"><path d="M.5 0v8.500h9V.5H7v4H3.500V.5M5.300.5v3"/></svg></button>
      <svg width="6" height="2" viewBox="0 0 6 2" style="margin-left:7px"><path d="M0 1h6" stroke="#444"/></svg>
      <input type="range" class="zoomer mx-1" aria-label="Zoom">
      <svg width="6" height="6" viewBox="0 0 6 6" stroke="#444"><path d="M0 3h6M3 0v6"/></svg>
      <span style="margin:0 18px 0 13px">100%</span>
    </div>
  </footer>
</main>

<div class="dockrow d-flex flex-shrink-0">
  <div class="paper" style="margin-left:53px"></div>
  <div class="dock d-flex align-items-start">
    <div class="apps d-flex justify-content-between">
      <a href="#" class="app run" aria-label="Finder"><svg viewBox="0 0 28 28"><defs><linearGradient id="fb" x2="0" y2="1"><stop stop-color="#22b8fb"/><stop offset="1" stop-color="#1a6ff0"/></linearGradient></defs><rect x="1" y="1" width="26" height="26" rx="1" fill="url(#fb)"/><path d="M16 1h11v26H17.500c-.8-3-1-6-1-9H12C12.500 11 14 5 16 1z" fill="#e4effa"/><path d="M8 8v3M20 8v3M5.500 18c4.500 5 12.500 5 17 0M16 1c-2.500 5-3.500 11-4 16.500h4.500c0 3.500.2 6.500 1 9.500" stroke="#123" fill="none" stroke-width="1.200"/></svg></a>
      <a href="#" class="app" aria-label="Launchpad"><svg viewBox="0 0 28 28"><circle cx="14" cy="14" r="13.500" fill="#a6adb2" stroke="#dfe3e6"/><path d="M22.500 5.500c-5 0-9 2.500-11.500 7l-4 1-2 3 4-.5 1 1-2 4.500 4.500-2 1 1-.5 4 3-2 1-4c4.500-3 6.500-7.500 5.500-13z" fill="#3f4549"/><circle cx="17" cy="11" r="2" fill="#a6adb2"/></svg></a>
      <a href="#" class="app" aria-label="Safari"><svg viewBox="0 0 28 28"><circle cx="14" cy="14" r="14" fill="#e9edf0"/><circle cx="14" cy="14" r="12.500" fill="#1e8bf0"/><circle cx="14" cy="14" r="10.500" fill="none" stroke="#b5e0ff" stroke-dasharray=".6 1.600" stroke-width="2"/><path d="m22.500 5.500-7 10-3-3z" fill="#f8382f"/><path d="m5.500 22.500 7-10 3 3z" fill="#f4f4f4"/></svg></a>
      <a href="#" class="app run" aria-label="Chrome"><svg viewBox="0 0 28 28"><rect x="1" y="1" width="26" height="26" rx="6" fill="#fafafa"/><circle cx="14" cy="14" r="11" fill="#fbc116"/><path d="M14 14 4.500 8.500A11 11 0 0 1 23.500 8.500z" fill="#e33b2e"/><path d="M4.500 8.500A11 11 0 0 0 13.500 25L18 16.500 14 14z" fill="#2da94f"/><path d="M23.500 8.500H14v5z" fill="#e33b2e"/><circle cx="14" cy="14" r="5.300" fill="#fff"/><circle cx="14" cy="14" r="4.200" fill="#2f7de9"/></svg></a>
      <a href="#" class="app" aria-label="Mail"><svg viewBox="0 0 28 28"><g transform="rotate(-8 14 14)"><path d="M3 0h22v28H3z" fill="#fff" stroke="#fff" stroke-width="1.500" stroke-dasharray="1 1"/><path d="M4.500 2h19v24h-19z" fill="#4f97da"/><path d="M4.500 18h19v8h-19z" fill="#9ec6e8"/><path d="M6 7c4 3 5 5 9 4 3 2 6 5 8 10-4-3-7-4-9-4-4-3-6-6-8-10zM11 13c-1 4-1 6 1 9l5-5z" fill="#5a3a1e"/><path d="m19 18 3 2-1 2-3-2z" fill="#eee"/></g><circle cx="23" cy="22" r="5" fill="none" stroke="#566" stroke-opacity=".6"/></svg></a>
      <a href="#" class="app" aria-label="FaceTime"><svg viewBox="0 0 28 28"><rect y="2" width="26" height="24" rx="5" fill="#2ed158"/><rect x="4" y="8" width="13" height="12" rx="3" fill="#f2fff5"/><path d="m18 12 4-3v10l-4-3z" fill="#f2fff5"/><circle cx="22" cy="19" r="7" fill="#f3f3f3"/><path d="M18.500 15.500c0 4 3 7 7 7l.7-2-2.200-1.500-1 1c-1-.5-1.500-1.200-2-2l1-1-1.300-2.300z" fill="#31c758"/></svg><span class="bub">1</span></a>
      <a href="#" class="app run" aria-label="Messages"><svg viewBox="0 0 28 28"><path d="M14 2C6.500 2 1 6.500 1 12.500c0 3.500 1.800 6.300 4.500 8-.2 2-1 3.800-2.500 5 3 0 5-1 6.500-3 1.500.4 3 .5 4.500.5 7.500 0 13-4.500 13-10.500S21.500 2 14 2z" fill="#2f97f7"/><ellipse cx="20" cy="20" rx="8" ry="6.500" fill="#f4f6f8"/><g fill="#35507a"><circle cx="16.500" cy="20" r="1.300"/><circle cx="20" cy="20" r="1.300"/><circle cx="23.500" cy="20" r="1.300"/></g></svg><span class="bub">2</span></a>
      <a href="#" class="app" aria-label="Maps"><svg viewBox="0 0 28 28"><g transform="rotate(-6 14 14)"><path d="M2 2h22v23H2z" fill="#f1ecdf"/><path d="M8 2h8l8 12v6L12 8z" fill="#6cc15a"/><path d="M4 3h4v21H4z" fill="#f3a6bd"/><path d="m9 9 10 16h4L12 8z" fill="#fff"/><path d="m14 16 8-3" stroke="#f7cf4c" stroke-width="3"/><circle cx="8" cy="17" r="4" fill="#2787f5"/><path d="M8 14v6M6 16h4" stroke="#fff"/></g><circle cx="22" cy="21" r="6" fill="#f5f8fb" stroke="#9ab"/><circle cx="22" cy="21" r="3" fill="none" stroke="#567"/></svg></a>
      <a href="#" class="app" aria-label="Contacts"><svg viewBox="0 0 28 28"><g transform="rotate(-4 14 14)"><path d="M23 8h3v5h-3z" fill="#4fa6e0"/><path d="M23 13h3v5h-3z" fill="#6cc15a"/><path d="M23 18h3v5h-3z" fill="#f39a2c"/><rect x="2" width="22" height="28" rx="2" fill="#a67c46"/><path d="M3 2v25" stroke="#8a6232"/><circle cx="13" cy="12" r="6.500" fill="none" stroke="#7d5629"/><circle cx="13" cy="10.500" r="2.500" fill="#7d5629"/><path d="M8.500 16c1.500-3 7.500-3 9 0-2 3-7 3-9 0z" fill="#7d5629"/></g></svg></a>
      <a href="#" class="app" aria-label="Photos"><svg viewBox="0 0 28 28"><circle cx="14" cy="14" r="14" fill="#f7f7f7"/><g fill-opacity=".85"><ellipse cx="14" cy="7.500" rx="3.500" ry="5" fill="#f79a1e"/><ellipse cx="14" cy="7.500" rx="3.500" ry="5" fill="#e8cf1c" transform="rotate(45 14 14)"/><ellipse cx="14" cy="7.500" rx="3.500" ry="5" fill="#a9cf38" transform="rotate(90 14 14)"/><ellipse cx="14" cy="7.500" rx="3.500" ry="5" fill="#5cba6c" transform="rotate(135 14 14)"/><ellipse cx="14" cy="7.500" rx="3.500" ry="5" fill="#5aaee0" transform="rotate(180 14 14)"/><ellipse cx="14" cy="7.500" rx="3.500" ry="5" fill="#7d76c4" transform="rotate(225 14 14)"/><ellipse cx="14" cy="7.500" rx="3.500" ry="5" fill="#c668a6" transform="rotate(270 14 14)"/><ellipse cx="14" cy="7.500" rx="3.500" ry="5" fill="#ee5440" transform="rotate(315 14 14)"/></g></svg></a>
      <a href="#" class="app" aria-label="Calendar"><svg viewBox="0 0 28 28"><g transform="rotate(-5 14 14)"><rect x="2.500" y="1" width="23" height="27" rx="1" fill="#555"/><path d="M2 1h23v25H2z" fill="#fafafa"/><path d="M2 1h23v7H2z" fill="#e8453c"/><text x="13.500" y="6.500" font-size="5.500" fill="#fff" text-anchor="middle" font-family="Inter,sans-serif">APR</text><text x="13.500" y="21.500" font-size="14" fill="#333" text-anchor="middle" font-family="Inter,sans-serif">13</text></g></svg></a>
      <a href="#" class="app" aria-label="Reminders"><svg viewBox="0 0 28 28"><g transform="rotate(-5 14 14)"><path d="M3 1h22v27H3z" fill="#444"/><path d="M2.500 0h22v26h-22z" fill="#fafafa"/><path d="M9 6h14M9 11h14M9 16h14M9 21h14" stroke="#ccc"/><circle cx="5.500" cy="6" r="1.700" fill="#2a7cf0"/><circle cx="5.500" cy="11" r="1.700" fill="#ea3f35"/><circle cx="5.500" cy="16" r="1.700" fill="#f29a2e"/><circle cx="5.500" cy="21" r="1.700" fill="#444f5e"/></g></svg><span class="bub">2</span></a>
      <a href="#" class="app" aria-label="Notes"><svg viewBox="0 0 28 28"><g transform="rotate(-4 14 14)"><path d="M3 1h22v27H3z" fill="#f8f8f4"/><path d="M3 0h22v6H3z" fill="#fdc82f"/><path d="M3 10h22M3 13h22M3 16h22M3 19h22M3 22h22M3 25h22" stroke="#d8d8d4"/></g></svg></a>
      <a href="#" class="app" aria-label="Music"><svg viewBox="0 0 28 28"><defs><linearGradient id="mu" x2="0" y2="1"><stop stop-color="#f8466e"/><stop offset=".6" stop-color="#b45be8"/><stop offset="1" stop-color="#3aa0fb"/></linearGradient></defs><circle cx="14" cy="14" r="14" fill="#f2f3f7"/><path d="M10 7.500 20.500 5v13.500a2.800 2.300 0 1 1-2-2.200V9L12 10.500V21a2.800 2.300 0 1 1-2-2.200z" fill="url(#mu)"/></svg></a>
      <a href="#" class="app" aria-label="Podcasts"><svg viewBox="0 0 28 28"><circle cx="14" cy="14" r="14" fill="#a63fd8"/><g fill="none" stroke="#fff" stroke-width="1.500"><path d="M8.500 20.500a9 9 0 1 1 11 0M10.500 16.500a5 5 0 1 1 7 0"/></g><circle cx="14" cy="13" r="2.300" fill="#fff"/><path d="M11.800 16.500h4.400l-.9 7.500h-2.600z" fill="#fff"/></svg></a>
      <a href="#" class="app" aria-label="TV"><svg viewBox="0 0 28 28"><circle cx="14" cy="14" r="14" fill="#111"/><svg x="5" y="9" width="8" height="9" viewBox="0 0 14 17" fill="#fff" style="width:8px;height:9px"><use href="#apple"/></svg><text x="13" y="18" font-size="9.500" font-weight="500" fill="#fff" font-family="Inter,sans-serif">tv</text></svg></a>
      <a href="#" class="app" aria-label="News"><svg viewBox="0 0 28 28"><circle cx="14" cy="14" r="14" fill="#f2f2f4"/><path d="M6.500 6.500h5l10.500 10v5h-5L6.500 11.500z" fill="#f23b55"/><path d="M15.500 6.500H22V13zM6.500 15v6.500H13z" fill="#f23b55"/></svg></a>
      <a href="#" class="app" aria-label="App Store"><svg viewBox="0 0 28 28"><circle cx="14" cy="14" r="14" fill="#1b87f3"/><path d="m15.500 6.500-7 12M12.500 6.500 19.500 19M5.500 16.500h9M18 16.500h4.500M8 20l-.8 1.300M20 19.500l1 1.800" stroke="#fff" stroke-width="2" stroke-linecap="round"/></svg></a>
      <a href="#" class="app" aria-label="System Preferences"><svg viewBox="0 0 28 28"><rect width="28" height="28" rx="1" fill="#a3a9ad"/><circle cx="14" cy="14" r="11.500" fill="#2e3133"/><circle cx="14" cy="14" r="10" fill="none" stroke="#8c9194" stroke-width="3" stroke-dasharray="1.500 1"/><circle cx="14" cy="14" r="6.500" fill="#222" stroke="#b4b8bb" stroke-width="1.500"/><path d="M14 14h6.500M14 14l-3.500-6M14 14l-3.500 6" stroke="#b4b8bb" stroke-width="1.500"/></svg><span class="bub">1</span></a>
      <a href="#" class="app" aria-label="Hub"><svg viewBox="0 0 28 28"><circle cx="14" cy="14" r="14" fill="#fbe7cc"/><circle cx="14" cy="14" r="12.800" fill="#f78e1e"/><path d="M14 6v16M7 10l14 8M21 10 7 18" stroke="#fff" stroke-width="1.800"/><g fill="#fff"><circle cx="14" cy="6.500" r="2.200"/><circle cx="14" cy="21.500" r="2.200"/><circle cx="7.500" cy="10.300" r="2.200"/><circle cx="20.500" cy="10.300" r="2.200"/><circle cx="7.500" cy="17.700" r="2.200"/><circle cx="20.500" cy="17.700" r="2.200"/><circle cx="14" cy="14" r="2.200"/></g></svg></a>
    </div>
    <span class="dsep" style="margin-left:10px"></span>
    <div class="d-flex" style="gap:6px;margin-left:10px">
      <a href="#" class="app run" aria-label="Pencil"><svg viewBox="0 0 28 28"><circle cx="14" cy="14" r="14" fill="#1c7fb8"/><path d="M9 0h10v15l-5 8-5-8z" fill="#f9b233"/><path d="M12.500 0h3v15h-3z" fill="#fdd663"/><path d="m9 15 5 8 5-8-2.500 1-2.500-1-2.500 1z" fill="#f6ddb5"/><path d="m12.300 20 1.700 2.800 1.700-2.800z" fill="#222"/></svg></a>
      <a href="#" class="app run" aria-label="Excel"><svg viewBox="0 0 28 28"><rect x="1" y="1" width="26" height="26" rx="6" fill="#fafafa"/><path d="M8 5h8v6H8z" fill="#21a366"/><path d="M16 5h7v6h-7z" fill="#33c481"/><path d="M8 11h8v6H8zM16 17h7v6H8v-6z" fill="#185c37"/><path d="M16 11h7v6h-7z" fill="#107c41"/><rect x="3" y="9" width="11" height="11" rx="1" fill="#107c41"/><path d="m6.500 11.500 4 6m0-6-4 6" stroke="#fff" stroke-width="1.500"/></svg></a>
      <a href="#" class="app run" aria-label="Calculator"><svg viewBox="0 0 28 28"><g transform="rotate(-8 14 14)"><path d="M3 0h22v28H3z" fill="#c4c6c8"/><path d="M3 0h22v6H3z" fill="#33383c"/><path d="M19 6h6v22h-6z" fill="#f58b1f"/><path d="M3 11.500h16M3 17h16M3 22.500h16M8.500 6v22M14 6v22" stroke="#a5a8aa" stroke-width=".8"/></g></svg></a>
    </div>
    <span class="dsep" style="margin-left:11px"></span>
    <a href="#" class="app" style="margin-left:10px" aria-label="Trash"><svg viewBox="0 0 28 28"><path d="M2.500 3h23l-3 24q-8.500 2.500-17 0z" fill="#d5d6d8"/><path d="M5 8l2 18M10 8l1 19M14 8v19M18 8l-1 19M23 8l-2 18" stroke="#c6c8ca"/><ellipse cx="14" cy="3.500" rx="11.500" ry="3.300" fill="#f1f1f1" stroke="#bbb"/><path d="M6 3l3-2 3 2 3-2.500 3 2.500 3-1" stroke="#47605a" fill="none" stroke-width="1.500"/><path d="m9 4 2-1M17 4l2-1" stroke="#4aa8d8" stroke-width="1.500"/></svg></a>
  </div>
</div>

<script>
const data = `Red shirt|Shirt|Front|171|$45.50|95|4322.5
Purple shirt|Shirt|Front|373|$89.99|175|15748.25
Brown pants|Pants|Right aisle|289|$110.89|398|44134.22
Gray pants|Pants|Middle|413|$50.00|432|21600
Blue shorts|Shorts|Left aisle|467|$95.99|376|36092.24
Black shorts|Shoes|Back|454|$54.99|65|3574.35
Orange dress|Dress|Front|236|$19.99|352|7036.48
Pink dress|Dress|Right aisle|351|$24.99|148|3698.52
Navy dress|Dress|Right aisle|49|$49.99|121|6048.79
Green shirt|Shirt|Left aisle|443|$33.14|412|13653.68
Blue shirt|Shirt|Middle|424|$26.75|367|9817.25
Gray shirt|Shirt|Right aisle|171|$40.29|249|10032.21
Black shirt|Shirt|Right aisle|112|$60.37|173|10444.01
White shirt|Shirt|Back|348|$86.78|63|5467.14
Blue pants|Pants|Left aisle|488|$65.75|465|30573.75
Green pants|Pants|Front|250|$52.53|472|24794.16
Yellow pants|Pants|Front|95|$50.06|185|9261.1
Khaki pants|Pants|Right aisle|405|$40.34|468|18879.12
Floral dress|Dress|Right aisle|460|$18.82|362|6812.84
Black dress|Dress|Back|373|$51.29|367|18823.43
White dress|Dress|Back|493|$60.70|236|14325.2
Striped dress|Dress|Front|185|$48.69|252|12269.88
Red hat|Hat|Middle|333|$40.95|489|20024.55
Blue hat|Hat|Left aisle|289|$50.04|158|7906.32
Black hat|Hat|Middle|254|$64.10|330|21153
White hat|Hat|Middle|247|$60.99|190|11588.1
Yellow hat|Hat|Back|41|$28.90|231|6675.9
Black socks|Socks|Left aisle|59|$12.00|82|984
White socks|Socks|Front|483|$21.21|498|10562.58
Gray socks|Socks|Left aisle|112|$8.99|456|4099.44
Blue socks|Socks|Left aisle|92|$3.57|74|264.18
Red shoes|Shoes|Right aisle|337|$60.58|267|16174.86
Yellow shoes|Shoes|Left aisle|464|$54.23|331|17950.13
White shoes|Shoes|Left aisle|95|$61.64|448|23614.72`.split('\n').map(l => l.split('|'));
const letters = 'ABCDEFGHIJKLMNOPQRST';
const widths = [12,38,51,54,63,58,72,38,56,59,59,57,121,38,38,37,38,38,37,38,38];
document.getElementById('cols').innerHTML = widths.map(w => `<col style="width:${w}px">`).join('') + '<col>';
document.getElementById('letters').innerHTML = '<th class="corner"></th>' + [...letters].map(c => `<th class="${c === 'K' ? 'sel' : ''}">${c}</th>`).join('');
const heads = [['Item ID',1],['Item Name',1],['Item Category',1],['Inventory Type',1],['Store Location',5],['Current Inventory',6],['Price',10],['Quantity Sold',5],['Total Revenue',5]];
const side = {2:['Store Location','Category'],3:['Front','New Arrival'],4:['Back','Clearance'],5:['Middle','Clothing Staples'],6:['Left aisle','Accessories'],7:['Right Aisle','Trendy'],10:['Q2',''],11:['Q3',''],12:['Q4',''],13:['Q5',''],14:['Q6','']};
let html = '';
for (let r = 1; r <= 35; r++) {
  html += `<tr><th class="${r === 22 ? 'sel' : ''}">${r}</th>`;
  const d = data[r - 2];
  [...letters].forEach((c, i) => {
    let cls = '', txt = '';
    if (i < 9) {
      if (r === 1) { cls = 'hd'; txt = `<div class="hdin"><span style="padding-left:${heads[i][1] - 1}px">${heads[i][0]}</span><button class="fbtn" aria-label="Filter"></button></div>`; }
      else { txt = [`${1232 + r}#RT`, d[0], d[1], '', d[2], d[3], d[4], d[5], d[6]][i]; cls = i === 6 ? 'cash' : i > 4 ? 'num' : ''; }
    }
    if (side[r]) {
      if ('JKL'.includes(c)) cls += ' blkR';
      if (c === 'K') txt = side[r][0];
      if (c === 'L') txt = side[r][1];
      if ('KL'.includes(c) && (r === 2 || r > 9)) cls += ' hd text-center';
    }
    if ('KL'.includes(c) && (side[r] || side[r + 1])) cls += ' blkB';
    if (c === 'K' && r === 22) cls = 'cur';
    html += `<td class="${cls}">${txt}</td>`;
  });
  html += '</tr>';
}
document.getElementById('rows').innerHTML = html;
</script>
<script src="https://cdn.jsdelivr.net/npm/bootstrap@5.3.0/dist/js/bootstrap.bundle.min.js"></script>
</body>
</html>
